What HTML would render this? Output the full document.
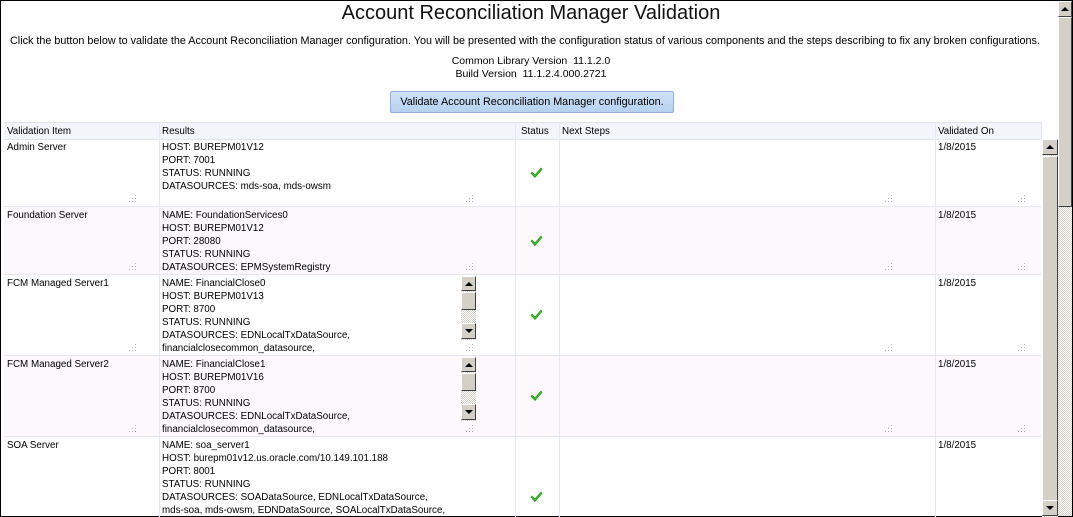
<!DOCTYPE html><html><head><style>
body{margin:0;width:1073px;height:517px;overflow:hidden;background:#fff;font-family:"Liberation Sans",sans-serif;color:#000;position:relative}
.a{position:absolute}
.frame{left:0;top:0;width:1071px;height:515px;border:1px solid #000}
.t{font-size:9.8px;line-height:13px;white-space:nowrap}
.hd{top:122px;left:4px;width:1037px;height:16px;background:#f3f5fb;border-top:1px solid #dde4ef;border-bottom:1px solid #dde4ef}
.vl{width:1px;background:#e4e8f0}
.row{left:4px;width:1037px;border-bottom:1px solid #e6e6ee}
.pk{background:#fcf8fc}
.sb{background:#d4d0c8;border:1px solid;border-color:#fff #404040 #404040 #fff;box-sizing:border-box}
.trk{background:repeating-conic-gradient(#d4d0c8 0 25%,#fff 0 50%) 0 0/2px 2px}
.arr{width:0;height:0;border-left:4px solid transparent;border-right:4px solid transparent}
</style></head><body>
<div class="a frame"></div>
<div class="a" style="left:0;top:2px;width:1062px;text-align:center;font-size:20px;color:#111">Account Reconciliation Manager Validation</div>
<div class="a t" style="left:10px;top:34px;font-size:10.8px;line-height:14px">Click the button below to validate the Account Reconciliation Manager configuration. You will be presented with the configuration status of various components and the steps describing to fix any broken configurations.</div>
<div class="a t" style="left:0;width:1062px;text-align:center;top:55px;font-size:10.5px">Common Library Version&nbsp; 11.1.2.0<br>Build Version&nbsp; 11.1.2.4.000.2721</div>
<div class="a t" style="left:390px;top:91px;width:282px;height:20px;line-height:20px;text-align:center;border:1px solid #8fb0d8;border-radius:2px;background:linear-gradient(#cfe2f8,#b6d1f0);font-size:10.8px">Validate Account Reconciliation Manager configuration.</div>
<div class="a hd"></div>
<div class="a t" style="top:125px;left:7px">Validation Item</div>
<div class="a t" style="top:125px;left:162px">Results</div>
<div class="a t" style="top:125px;left:521px">Status</div>
<div class="a t" style="top:125px;left:562px">Next Steps</div>
<div class="a t" style="top:125px;left:938px">Validated On</div>

<div class="a row" style="top:139px;height:67px"></div>
<div class="a row pk" style="top:207px;height:67px"></div>
<div class="a row" style="top:275px;height:80px"></div>
<div class="a row pk" style="top:356px;height:80px"></div>
<div class="a row" style="top:437px;height:80px;border:0"></div>
<div class="a vl" style="left:159px;top:122px;height:395px"></div>
<div class="a vl" style="left:515px;top:122px;height:395px"></div>
<div class="a vl" style="left:559px;top:122px;height:395px"></div>
<div class="a vl" style="left:935px;top:122px;height:395px"></div>
<div class="a vl" style="left:1041px;top:122px;height:17px"></div>

<div class="a t" style="top:141px;left:7px">Admin Server</div>
<div class="a t" style="top:141px;left:162px">HOST: BUREPM01V12<br>PORT: 7001<br>STATUS: RUNNING<br>DATASOURCES: mds-soa, mds-owsm</div>
<div class="a t" style="top:209px;left:7px">Foundation Server</div>
<div class="a t" style="top:209px;left:162px">NAME: FoundationServices0<br>HOST: BUREPM01V12<br>PORT: 28080<br>STATUS: RUNNING<br>DATASOURCES: EPMSystemRegistry</div>
<div class="a t" style="top:277px;left:7px">FCM Managed Server1</div>
<div class="a t" style="top:277px;left:162px">NAME: FinancialClose0<br>HOST: BUREPM01V13<br>PORT: 8700<br>STATUS: RUNNING<br>DATASOURCES: EDNLocalTxDataSource,<br>financialclosecommon_datasource,</div>
<div class="a t" style="top:358px;left:7px">FCM Managed Server2</div>
<div class="a t" style="top:358px;left:162px">NAME: FinancialClose1<br>HOST: BUREPM01V16<br>PORT: 8700<br>STATUS: RUNNING<br>DATASOURCES: EDNLocalTxDataSource,<br>financialclosecommon_datasource,</div>
<div class="a t" style="top:439px;left:7px">SOA Server</div>
<div class="a t" style="top:439px;left:162px">NAME: soa_server1<br>HOST: burepm01v12.us.oracle.com/10.149.101.188<br>PORT: 8001<br>STATUS: RUNNING<br>DATASOURCES: SOADataSource, EDNLocalTxDataSource,<br>mds-soa, mds-owsm, EDNDataSource, SOALocalTxDataSource,</div>

<div class="a t" style="top:141px;left:938px">1/8/2015</div>
<div class="a t" style="top:209px;left:938px">1/8/2015</div>
<div class="a t" style="top:277px;left:938px">1/8/2015</div>
<div class="a t" style="top:358px;left:938px">1/8/2015</div>
<div class="a t" style="top:439px;left:938px">1/8/2015</div>

<svg class="a" style="left:0;top:0" width="1073" height="517">
<defs><path id="ck" d="M0 5 L3 8 L9 1 L10 2.5 L3 10.5 L-1 6.5Z" fill="#3cbf2c" stroke="#249018" stroke-width=".6"/>
<g id="gp" fill="#b0b0b0"><rect x="6" y="0" width="1" height="1"/><rect x="6" y="3" width="1" height="1"/><rect x="3" y="3" width="1" height="1"/><rect x="6" y="6" width="1" height="1"/><rect x="3" y="6" width="1" height="1"/><rect x="0" y="6" width="1" height="1"/></g></defs>
<use href="#ck" x="532" y="167"/><use href="#ck" x="532" y="235"/><use href="#ck" x="532" y="309"/><use href="#ck" x="532" y="390"/><use href="#ck" x="532" y="491"/>
<use href="#gp" x="129" y="195"/><use href="#gp" x="466" y="195"/><use href="#gp" x="885" y="195"/><use href="#gp" x="1018" y="195"/>
<use href="#gp" x="129" y="263"/><use href="#gp" x="466" y="263"/><use href="#gp" x="885" y="263"/><use href="#gp" x="1018" y="263"/>
<use href="#gp" x="129" y="344"/><use href="#gp" x="466" y="344"/><use href="#gp" x="885" y="344"/><use href="#gp" x="1018" y="344"/>
<use href="#gp" x="129" y="425"/><use href="#gp" x="466" y="425"/><use href="#gp" x="885" y="425"/><use href="#gp" x="1018" y="425"/>
</svg>

<div class="a trk" style="left:461px;top:276px;width:15px;height:64px"></div>
<div class="a sb" style="left:461px;top:276px;width:15px;height:15px"><div class="a arr" style="left:3px;top:5px;border-bottom:4px solid #000"></div></div>
<div class="a sb" style="left:461px;top:292px;width:15px;height:18px"></div>
<div class="a sb" style="left:461px;top:323px;width:15px;height:16px"><div class="a arr" style="left:3px;top:5px;border-top:4px solid #000"></div></div>
<div class="a trk" style="left:461px;top:357px;width:15px;height:64px"></div>
<div class="a sb" style="left:461px;top:357px;width:15px;height:15px"><div class="a arr" style="left:3px;top:5px;border-bottom:4px solid #000"></div></div>
<div class="a sb" style="left:461px;top:373px;width:15px;height:18px"></div>
<div class="a sb" style="left:461px;top:404px;width:15px;height:16px"><div class="a arr" style="left:3px;top:5px;border-top:4px solid #000"></div></div>

<div class="a trk" style="left:1042px;top:139px;width:16px;height:378px"></div>
<div class="a sb" style="left:1042px;top:139px;width:16px;height:16px"><div class="a arr" style="left:3px;top:5px;border-bottom:4px solid #000"></div></div>
<div class="a sb" style="left:1042px;top:156px;width:16px;height:345px"></div>
<div class="a sb" style="left:1042px;top:500px;width:16px;height:16px"><div class="a arr" style="left:3px;top:5px;border-top:4px solid #000"></div></div>
<div class="a trk" style="left:1058px;top:1px;width:14px;height:515px"></div>
<div class="a sb" style="left:1058px;top:1px;width:14px;height:16px"><div class="a arr" style="left:2px;top:5px;border-bottom:4px solid #000"></div></div>
<div class="a sb" style="left:1058px;top:17px;width:14px;height:190px"></div>
</body></html>
